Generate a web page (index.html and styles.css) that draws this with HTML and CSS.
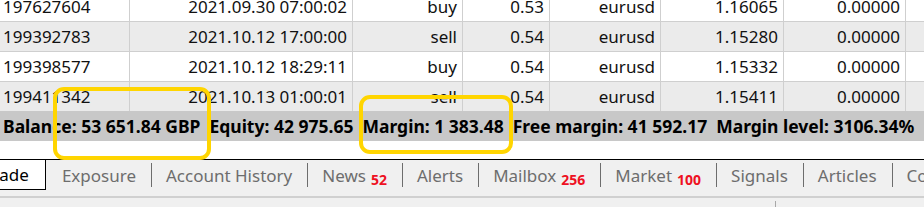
FILE: index.html
```html
<!DOCTYPE html>
<html>
<head>
<meta charset="utf-8">
<link rel="stylesheet" href="styles.css">
</head>
<body>
<div class="page">
  <div class="grid-wrap">
    <div class="grid">
      <div class="row">
        <div class="c first">197627604</div><div class="c">2021.09.30 07:00:02</div><div class="c">buy</div><div class="c">0.53</div><div class="c">eurusd</div><div class="c">1.16065</div><div class="c">0.00000</div><div class="c last"></div>
      </div>
      <div class="row alt">
        <div class="c first">199392783</div><div class="c">2021.10.12 17:00:00</div><div class="c">sell</div><div class="c">0.54</div><div class="c">eurusd</div><div class="c">1.15280</div><div class="c">0.00000</div><div class="c last"></div>
      </div>
      <div class="row">
        <div class="c first">199398577</div><div class="c">2021.10.12 18:29:11</div><div class="c">buy</div><div class="c">0.54</div><div class="c">eurusd</div><div class="c">1.15332</div><div class="c">0.00000</div><div class="c last"></div>
      </div>
      <div class="row alt">
        <div class="c first">199411342</div><div class="c">2021.10.13 01:00:01</div><div class="c">sell</div><div class="c">0.54</div><div class="c">eurusd</div><div class="c">1.15411</div><div class="c">0.00000</div><div class="c last"></div>
      </div>
    </div>
  </div>
  <div class="status">
    <span>Balance: 53 651.84 GBP</span>
    <span>Equity: 42 975.65</span>
    <span>Margin: 1 383.48</span>
    <span>Free margin: 41 592.17</span>
    <span>Margin level: 3106.34%</span>
  </div>
  <div class="spacer"></div>
  <div class="tabs">
    <div class="tab active">Trade</div>
    <div class="tab first-tab">Exposure</div>
    <div class="tab sep">Account History</div>
    <div class="tab sep">News<span class="badge">52</span></div>
    <div class="tab sep">Alerts</div>
    <div class="tab sep">Mailbox<span class="badge">256</span></div>
    <div class="tab sep">Market<span class="badge">100</span></div>
    <div class="tab sep">Signals</div>
    <div class="tab sep">Articles</div>
    <div class="tab sep">Code Base</div>
  </div>
  <div class="below">
    <div class="below-inner"><div class="bcol"></div><div class="bcol2"></div></div>
  </div>
  <div class="mark mark-balance"></div>
  <div class="mark mark-margin"></div>
</div>
</body>
</html>
```

FILE: styles.css
```css
* { box-sizing: border-box; }
html, body { margin: 0; padding: 0; }
body {
  width: 924px;
  height: 207px;
  overflow: hidden;
  background: #ffffff;
  font-family: "Noto Sans", "Open Sans", sans-serif;
  color: #000;
}
.page { position: relative; width: 924px; height: 207px; overflow: hidden; }

.grid-wrap { height: 111px; overflow: hidden; }
.grid { margin-top: -8px; }
.row {
  display: grid;
  grid-template-columns: 130px 223px 110px 87px 111px 123px 122px 1fr;
  height: 30px;
  border-bottom: 1px solid #cfcfcf;
  background: #ffffff;
}
.row.alt { background: #ebebeb; }
.c {
  border-right: 1px solid #cfcfcf;
  padding: 0 5px 0 0;
  text-align: right;
  font-size: 17px;
  line-height: 29px;
  white-space: nowrap;
  color: #111;
}
.c.first { text-align: left; padding-left: 3px; }
.c.last { border-right: none; }

.status {
  height: 30px;
  background: #c8c8c8;
  display: flex;
  gap: 9px;
  align-items: center;
  padding-left: 3px;
  font-weight: 700;
  font-size: 17.5px;
  white-space: nowrap;
  color: #000;
}
.spacer { height: 18px; background: #fff; }

.tabs {
  height: 31px;
  background: #f0f0f0;
  border-top: 1px solid #000;
  display: flex;
  align-items: stretch;
  white-space: nowrap;
}
.tab {
  position: relative;
  display: flex;
  align-items: center;
  padding: 0 15px;
  font-size: 17px;
  color: #6d6d6d;
}
.tab.active {
  margin-left: -31px;
  margin-top: -1px;
  background: #fff;
  color: #000;
  border: 1px solid #000;
  border-left: none;
  padding-right: 16px;
  height: 31px;
}
.tab.first-tab { padding-left: 16px; }
.tab.sep::before {
  content: "";
  position: absolute;
  left: 0;
  top: 3px;
  height: 24px;
  width: 1px;
  background: #6d6d6d;
}
.badge {
  color: #ee1122;
  font-weight: 700;
  font-size: 14px;
  margin-left: 5px;
  position: relative;
  top: 4px;
}

.below {
  height: 18px;
  background: #f0f0f0;
  padding-top: 6px;
}
.below-inner {
  height: 12px;
  border-top: 2px solid #d0d0d0;
  display: flex;
}
.bcol { width: 776px; border-right: 1px solid #a8a8a8; margin-top: 3px; }
.bcol2 { flex: 1; }

.mark {
  position: absolute;
  border: 4px solid #ffd500;
  border-radius: 11px;
}
.mark-balance { left: 53px; top: 87px; width: 158px; height: 73px; }
.mark-margin { left: 359px; top: 95px; width: 154px; height: 59px; }
```
